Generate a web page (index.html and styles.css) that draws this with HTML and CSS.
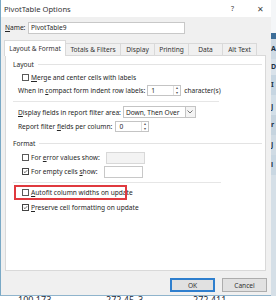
FILE: index.html
```html
<!DOCTYPE html>
<html>
<head>
<meta charset="utf-8">
<link rel="stylesheet" href="styles.css">
</head>
<body>
<div class="screen">
  <div class="top">
    <div class="dialog">
      <div class="titlebar">
        <span class="title">PivotTable Options</span>
        <span class="help">?</span>
        <span class="close">✕</span>
      </div>
      <div class="namerow">
        <span class="namelabel"><u>N</u>ame:</span>
        <div class="field namefield">PivotTable9</div>
      </div>
      <div class="tabs">
        <div class="tab sel t1">Layout &amp; Format</div>
        <div class="tab t2">Totals &amp; Filters</div>
        <div class="tab t3">Display</div>
        <div class="tab t4">Printing</div>
        <div class="tab t5">Data</div>
        <div class="tab t6">Alt Text</div>
      </div>
      <div class="panel">
        <div class="group g1"><span>Layout</span><div class="gline"></div></div>
        <div class="row r-merge"><span class="cb"></span><span><u>M</u>erge and center cells with labels</span></div>
        <div class="row ind r-when"><span>When in <u>c</u>ompact form indent row labels:</span><div class="spin w34"><span class="val">1</span><span class="arrows"><i>▴</i><i>▾</i></span></div><span>character(s)</span></div>
        <div class="rule"></div>
        <div class="row ind r-disp"><span><u>D</u>isplay fields in report filter area:</span><div class="combo"><span class="val">Down, Then Over</span><span class="drop"><svg width="6" height="4" viewBox="0 0 6 4"><path d="M0.5 0.5 L3 3 L5.5 0.5" fill="none" stroke="#555" stroke-width="0.8"/></svg></span></div></div>
        <div class="row ind r-rep"><span>Report filter <u>f</u>ields per column:</span><div class="spin w34"><span class="val">0</span><span class="arrows"><i>▴</i><i>▾</i></span></div></div>
        <div class="group g2"><span>Format</span><div class="gline"></div></div>
        <div class="row r-err"><span class="cb"></span><span>For <u>e</u>rror values show:</span><div class="field box dis"></div></div>
        <div class="row r-emp"><span class="cb on"><svg width="7" height="7" viewBox="0 0 7 7"><path d="M1.2 3.6 L2.8 5.2 L5.9 1.6" fill="none" stroke="#222" stroke-width="0.9"/></svg></span><span>For empty cells <u>s</u>how:</span><div class="field box"></div></div>
        <div class="rule r2"></div>
        <div class="row r-auto"><span class="cb"></span><span><u>A</u>utofit column widths on update</span><div class="redbox"></div></div>
        <div class="row r-pres"><span class="cb on"><svg width="7" height="7" viewBox="0 0 7 7"><path d="M1.2 3.6 L2.8 5.2 L5.9 1.6" fill="none" stroke="#222" stroke-width="0.9"/></svg></span><span><u>P</u>reserve cell formatting on update</span></div>
      </div>
      <div class="buttons">
        <div class="btn ok">OK</div>
        <div class="btn">Cancel</div>
      </div>
    </div>
    <div class="strip">
      <div class="s s1"></div>
      <div class="s s2"></div>
      <div class="s s3">A</div>
      <div class="s s4">D</div>
      <div class="s s5">I</div>
      <div class="s s6">J</div>
      <div class="s s7">r</div>
      <div class="s s8">J</div>
      <div class="s s9">l</div>
      <div class="s s10"></div>
    </div>
  </div>
  <div class="bottom">
    <span class="n1">100,173</span><span class="n2">272,45</span><span class="n3">3</span><span class="n4">272,411</span>
  </div>
</div>
</body>
</html>
```
FILE: styles.css
```css
* { box-sizing: border-box; }
html, body { margin: 0; padding: 0; }
body {
  width: 276px;
  height: 300px;
  overflow: hidden;
  background: #ffffff;
  font-family: "Segoe UI", "Noto Sans", sans-serif;
  font-size: 6.6px;
  color: #262626;
}
u { text-decoration: underline; text-underline-offset: 1px; }

.screen { display: flex; flex-direction: column; width: 276px; height: 300px; }
.top { display: flex; height: 296px; }

.dialog {
  width: 271px;
  height: 296px;
  background: #f0f0f0;
  border-left: 1px solid #7aa9c6;
  border-bottom: 1px solid #8fb4cc;
  display: flex;
  flex-direction: column;
}

.titlebar {
  height: 17px;
  background: #ffffff;
  display: flex;
  align-items: center;
  padding-left: 3px;
  padding-right: 6px;
}
.title { font-size: 7.6px; color: #333; flex: 1; }
.help { font-size: 7px; color: #444; width: 26px; }
.close { font-size: 7.5px; color: #444; width: 8px; }

.namerow {
  height: 21px;
  display: flex;
  align-items: center;
  padding-left: 4px;
  gap: 4px;
}
.namelabel { width: 19px; }
.field {
  background: #fff;
  border: 1px solid #c8c8c8;
  height: 12px;
  display: flex;
  align-items: center;
  padding-left: 2px;
}
.namefield { width: 157px; }

.tabs {
  display: flex;
  align-items: flex-end;
  height: 16px;
  padding-left: 4px;
  margin-top: 1px;
}
.tab {
  height: 12px;
  border: 1px solid #d9d9d9;
  border-bottom: none;
  margin-left: -1px;
  background: #f0f0f0;
  display: flex;
  align-items: center;
  justify-content: center;
  color: #333;
}
.tab.sel {
  background: #fff;
  position: relative;
  z-index: 1;
  margin-bottom: -1px;
  height: 16px;
}
.t1 { width: 62px; }
.t2 { width: 56px; }
.t3 { width: 35px; }
.t4 { width: 35px; }
.t5 { width: 35px; }
.t6 { width: 35px; }

.panel {
  margin-left: 4px;
  width: 261px;
  height: 216px;
  background: #fff;
  border: 1px solid #d9d9d9;
  padding-left: 7px;
  padding-top: 1px;
  display: flex;
  flex-direction: column;
}

.group {
  display: flex;
  align-items: center;
  gap: 4px;
  height: 14px;
}
.gline { flex: 1; height: 1px; background: #e3e3e3; margin-right: 3px; }
.g2 { height: 16px; margin-top: 1px; }

.row {
  display: flex;
  align-items: center;
  white-space: nowrap;
}
.ind { padding-left: 5px; }
.cb {
  width: 7px;
  height: 7px;
  border: 1px solid #5a5a5a;
  background: #fff;
  margin-left: 9px;
  margin-right: 2px;
  display: flex;
  align-items: center;
  justify-content: center;
  flex: none;
}
.cb svg { display: block; }
.cb.on { border-color: #444; }

.r-merge { height: 13px; }
.r-when { height: 13px; gap: 0; }
.r-when .spin { margin-left: 2px; margin-right: 3px; }
.rule { height: 1px; background: #e6e6e6; width: 206px; margin: 4px 0 3px 0; }
.r-disp { height: 14px; }
.r-rep { height: 15px; }
.r-err { height: 13px; }
.r-emp { height: 15px; }
.r2 { width: 208px; margin: 3px 0 2px 0; }
.r-auto { height: 15px; position: relative; }
.r-pres { height: 15px; }

.spin {
  height: 11px;
  background: #fff;
  border: 1px solid #c4c4c4;
  display: flex;
  align-items: stretch;
}
.w34 { width: 34px; }
.spin .val { flex: 1; padding-left: 3px; display: flex; align-items: center; }
.arrows {
  width: 7px;
  display: flex;
  flex-direction: column;
  border-left: 1px solid #e0e0e0;
}
.arrows i {
  font-style: normal;
  font-size: 4px;
  line-height: 4.5px;
  height: 4.5px;
  text-align: center;
  color: #555;
}
.r-disp .combo { margin-left: 2px; }
.r-rep .spin { margin-left: 3px; }

.combo {
  width: 73px;
  height: 12px;
  background: #fff;
  border: 1px solid #c4c4c4;
  display: flex;
  align-items: stretch;
}
.combo .val { flex: 1; padding-left: 2px; display: flex; align-items: center; }
.drop {
  width: 10px;
  border-left: 1px solid #c4c4c4;
  background: #f4f4f4;
  display: flex;
  align-items: center;
  justify-content: center;
}

.box { width: 39px; height: 12px; margin-left: 6px; padding: 0; }
.r-emp .box { margin-left: 7px; }
.dis { background: #f3f3f3; border-color: #d8d8d8; }

.redbox {
  position: absolute;
  left: 1px;
  top: 0px;
  width: 113px;
  height: 15px;
  border: 2px solid #e0393e;
}

.buttons {
  display: flex;
  justify-content: flex-end;
  gap: 7px;
  padding-right: 4px;
  margin-top: 7px;
}
.btn {
  width: 45px;
  height: 14px;
  background: #e1e1e1;
  border: 1px solid #adadad;
  display: flex;
  align-items: center;
  justify-content: center;
  color: #333;
}
.btn.ok { border: 2px solid #2f7fce; }

.strip {
  width: 5px;
  display: flex;
  flex-direction: column;
  background: #c7d6e2;
}
.s { font-size: 7px; line-height: 7px; color: #1e3347; overflow: hidden; font-weight: bold; }
.s1 { height: 33px; background: #f4f6f8; }
.s2 { height: 6px; background: #3d6e99; }
.s3 { height: 20px; padding-top: 6px; background: #cfdbe5; }
.s4 { height: 16px; padding-top: 4px; background: #d9e2ea; }
.s5 { height: 20px; padding-top: 6px; background: #c7d6e2; }
.s6 { height: 20px; padding-top: 8px; background: #d3dfe8; }
.s7 { height: 20px; padding-top: 6px; background: #c6d4df; }
.s8 { height: 20px; padding-top: 6px; background: #d0dbe4; }
.s9 { height: 20px; padding-top: 6px; background: #c9d7e2; }
.s10 { flex: 1; background: #d5dfe7; }

.bottom {
  height: 4px;
  overflow: hidden;
  position: relative;
  font-size: 9px;
  line-height: 9px;
  color: #1c2a38;
  display: flex;
}
.bottom span { margin-top: -1px; }
.n1 { margin-left: 18px; width: 88px; }
.n2 { width: 32px; }
.n3 { width: 55px; }
.n4 { }
```
